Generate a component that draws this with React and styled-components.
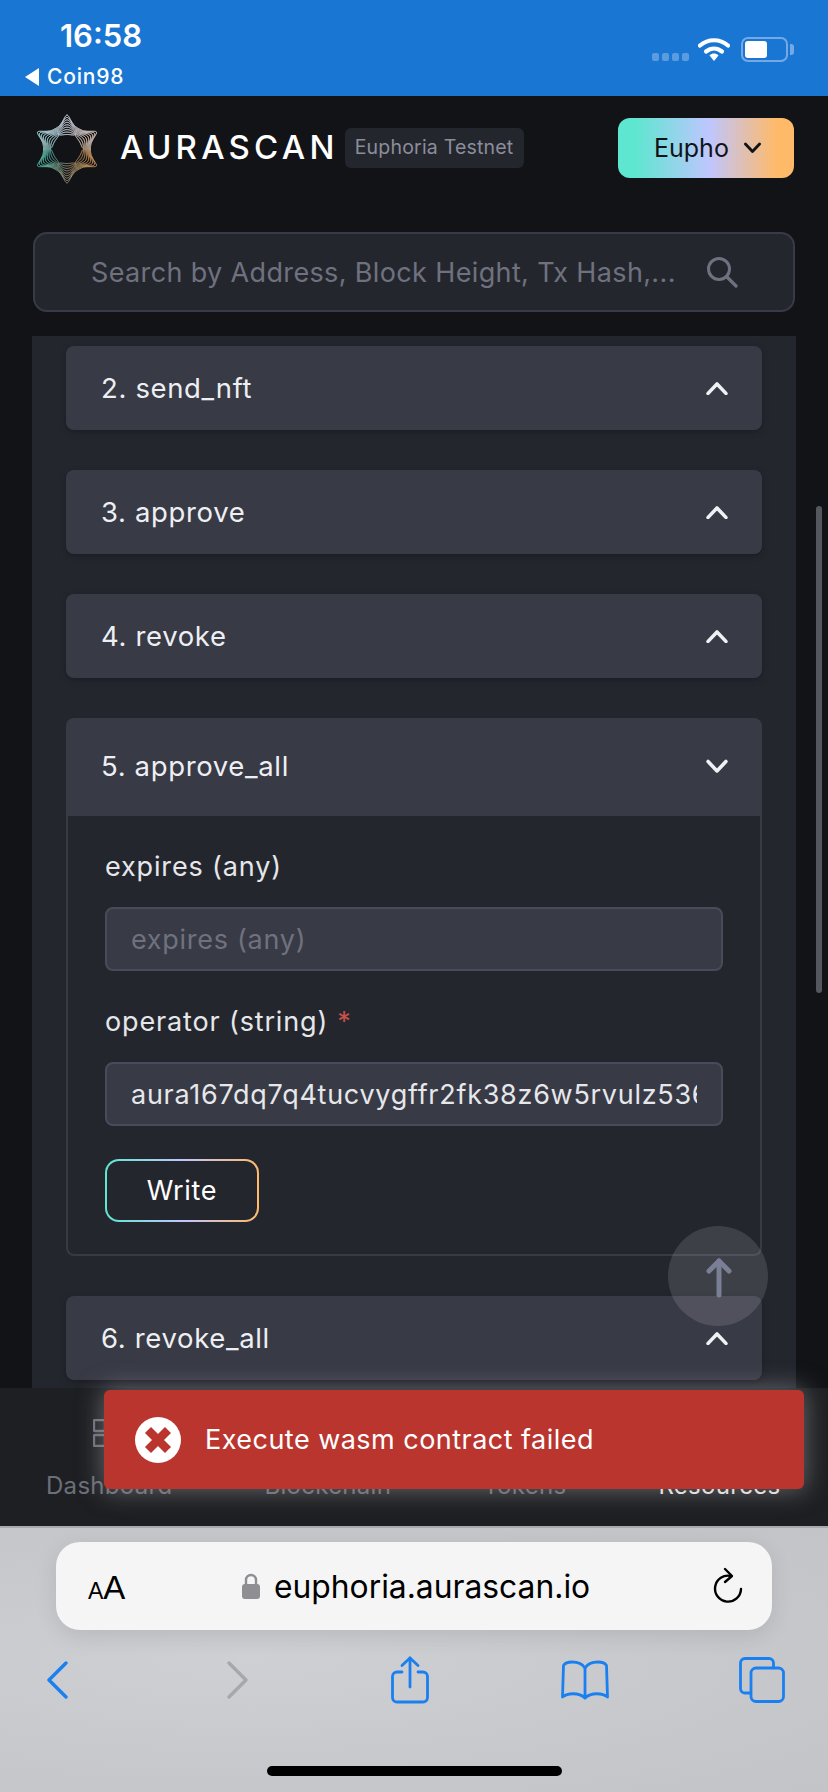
import React from "react";
import styled, { createGlobalStyle } from "styled-components";

const Global = createGlobalStyle`
  html, body { margin: 0; padding: 0; background: #121317; }
  * { box-sizing: border-box; }
  #root { width: 828px; height: 1792px; }
`;

const Page = styled.div`
  position: relative;
  width: 828px;
  height: 1792px;
  display: flex;
  flex-direction: column;
  overflow: hidden;
  background: #121317;
  font-family: Inter, "Noto Sans", sans-serif;
`;

const StatusBar = styled.div`
  height: 96px;
  flex: none;
  background: #1976d3;
  display: flex;
  justify-content: space-between;
  color: #fff;
  padding: 0 34px 0 25px;
`;
const StatusLeft = styled.div`
  display: flex;
  flex-direction: column;
`;
const Time = styled.div`
  font-size: 31px;
  font-weight: 600;
  line-height: 36px;
  margin: 18px 0 0 35px;
`;
const Back = styled.div`
  display: flex;
  align-items: center;
  gap: 8px;
  font-size: 21px;
  font-weight: 500;
  letter-spacing: 0.8px;
  line-height: 26px;
  margin-top: 10px;
`;
const StatusRight = styled.div`
  display: flex;
  align-items: flex-start;
  padding-top: 37px;
`;
const Dots = styled.div`
  display: flex;
  gap: 2.4px;
  margin: 16px 9px 0 0;
`;
const Dot = styled.span`
  width: 7.5px;
  height: 8px;
  border-radius: 2px;
  background: #5b9be0;
`;
const Battery = styled.div`
  width: 47px;
  height: 25px;
  margin-left: 11px;
  border: 2px solid #74a9e6;
  border-radius: 7px;
  padding: 2px;
`;
const BatteryFill = styled.div`
  width: 22px;
  height: 17px;
  border-radius: 3px;
  background: #fff;
`;
const BatteryNub = styled.div`
  width: 4px;
  height: 11px;
  margin: 7px 0 0 2px;
  border-radius: 0 3px 3px 0;
  background: #74a9e6;
`;

const Header = styled.div`
  flex: none;
  height: 136px;
  display: flex;
  align-items: flex-start;
  padding: 18px 34px 0 35px;
`;
const Brand = styled.div`
  font-size: 33px;
  font-weight: 500;
  letter-spacing: 4.2px;
  line-height: 40px;
  color: #fff;
  margin: 13px 0 0 21px;
`;
const Badge = styled.div`
  height: 40px;
  width: 179px;
  margin: 14px 0 0 6px;
  background: #24262e;
  border-radius: 6px;
  color: #8b8e9a;
  font-size: 19.5px;
  letter-spacing: 0.2px;
  line-height: 38px;
  text-align: center;
  white-space: nowrap;
`;
const Network = styled.div`
  margin: 4px 0 0 auto;
  width: 176px;
  height: 60px;
  border-radius: 12px;
  background: linear-gradient(90deg, #5ee6d0 10%, #bfc6ff 52%, #ffba69 90%);
  display: flex;
  align-items: center;
  gap: 14px;
  padding-left: 36px;
  color: #121317;
  font-size: 25px;
`;

const SearchWrap = styled.div`
  flex: none;
  padding: 0 33px 24px;
`;
const Search = styled.div`
  height: 80px;
  background: #24262e;
  border: 2px solid #383b47;
  border-radius: 14px;
  display: flex;
  align-items: center;
  justify-content: space-between;
  padding: 0 55px 0 56px;
  color: #6f727e;
  font-size: 27px;
  letter-spacing: 0.36px;
  white-space: nowrap;
`;

const Panel = styled.div`
  flex: 1;
  margin: 0 32px;
  background: #24262e;
  padding: 10px 34px 0;
  overflow: hidden;
  display: flex;
  flex-direction: column;
  gap: 40px;
`;
const Item = styled.div`
  flex: none;
  border-radius: 8px;
`;
const ItemHead = styled.div`
  height: ${(p) => (p.$open ? 98 : 84)}px;
  background: #383a46;
  border-radius: ${(p) => (p.$open ? "8px 8px 0 0" : "8px")};
  box-shadow: ${(p) => (p.$open ? "none" : "0 2px 6px rgba(0,0,0,.25)")};
  display: flex;
  align-items: center;
  justify-content: space-between;
  padding: 0 33px ${(p) => (p.$open ? 2 : 0)}px 35px;
  color: #eeeff2;
  font-size: 27.5px;
  letter-spacing: 0.65px;
`;
const ItemBody = styled.div`
  height: 440px;
  border: 2px solid #383a46;
  border-top: 0;
  border-radius: 0 0 8px 8px;
  padding: 32px 37px 0;
`;
const Label = styled.div`
  color: #e6e7ea;
  font-size: 27px;
  letter-spacing: 0.85px;
  line-height: 38px;
`;
const Star = styled.span`
  color: #c94f4a;
  margin-left: 9px;
`;
const Field = styled.input`
  display: block;
  width: 100%;
  height: 64px;
  margin: 21px 0 32px;
  background: #383a46;
  border: 2px solid #494c58;
  border-radius: 8px;
  padding: 0 24px;
  color: #e6e7ea;
  font-family: inherit;
  font-size: 27px;
  letter-spacing: 0.72px;
  outline: none;
  &::placeholder { color: #6f727e; opacity: 1; }
`;
const WriteButton = styled.div`
  width: 154px;
  height: 63px;
  margin-top: 33px;
  border: 2px solid transparent;
  border-radius: 14px;
  background: linear-gradient(#24262e, #24262e) padding-box,
    linear-gradient(90deg, #5ee6d0, #bfc6ff 50%, #ffba69) border-box;
  display: flex;
  align-items: center;
  justify-content: center;
  color: #fff;
  font-size: 27px;
  letter-spacing: 0.7px;
`;

const BottomNav = styled.div`
  flex: none;
  height: 138px;
  background: #1e1f22;
  display: flex;
  gap: 92px;
  padding: 31px 0 0 46px;
`;
const NavItem = styled.div`
  display: flex;
  flex-direction: column;
  align-items: center;
  gap: 24px;
  color: ${(p) => (p.$active ? "#f2f2f4" : "#6c6f7a")};
  font-size: 24px;
  letter-spacing: 0.3px;
  line-height: 30px;
`;

const Safari = styled.div`
  flex: none;
  height: 266px;
  position: relative;
  border-top: 2px solid #a9aaad;
  background: radial-gradient(ellipse at 30% 50%, #cfd0d4 0%, #c7c8cc 60%, #c3c4c8 100%);
  padding: 14px 56px 0 56px;
  display: flex;
  flex-direction: column;
`;
const UrlBar = styled.div`
  flex: none;
  height: 88px;
  border-radius: 24px;
  background: #f5f5f5;
  box-shadow: 0 6px 22px rgba(0, 0, 0, 0.1);
  display: flex;
  align-items: center;
  padding: 0 28px 0 32px;
  color: #000;
`;
const AaSmall = styled.span`
  font-family: "Liberation Sans", sans-serif;
  font-size: 23px;
`;
const AaBig = styled.span`
  font-family: "Liberation Sans", sans-serif;
  font-size: 33px;
`;
const Aa = styled.div`
  display: flex;
  align-items: baseline;
  width: 154px;
  margin-top: 4px;
`;
const Url = styled.div`
  flex: 1;
  display: flex;
  align-items: center;
  gap: 14px;
  font-size: 31.8px;
`;
const Tools = styled.div`
  height: 72px;
  margin: 14px 0 0 -10px;
  display: flex;
  align-items: center;
`;
const ToolIcon = styled.span`
  display: flex;
  flex: none;
  margin-left: ${(p) => p.$gap || 0}px;
`;
const HomeBar = styled.div`
  position: absolute;
  left: 267px;
  bottom: 16px;
  width: 295px;
  height: 10px;
  border-radius: 5px;
  background: #000;
`;

const Toast = styled.div`
  position: absolute;
  left: 104px;
  top: 1390px;
  width: 700px;
  height: 99px;
  background: #bb352f;
  border-radius: 6px;
  box-shadow: 0 0 24px 2px rgba(165, 165, 170, 0.5);
  display: flex;
  align-items: center;
  gap: 24px;
  padding-left: 31px;
  color: #fff;
  font-size: 27px;
  letter-spacing: 0.47px;
`;
const ScrollTop = styled.div`
  position: absolute;
  left: 668px;
  top: 1226px;
  width: 100px;
  height: 100px;
  border-radius: 50%;
  background: rgba(255, 255, 255, 0.12);
  display: flex;
  align-items: center;
  justify-content: center;
`;
const ScrollThumb = styled.div`
  position: absolute;
  left: 816px;
  top: 506px;
  width: 6px;
  height: 487px;
  border-radius: 3px;
  background: #55575e;
`;

function LogoMark() {
  const paths = [];
  const N = 8;
  const cx = 32;
  const cy = 35;
  const sec = Math.PI / 3;
  for (let k = 0; k <= N; k++) {
    const s = k / N;
    let d = "";
    for (let i = 0; i <= 360; i += 2) {
      const a = (i * Math.PI) / 180;
      const c = 0.5 - 0.5 * Math.cos(6 * a);
      const rOut = 23.5 + 10.5 * Math.pow(c, 1.25);
      const m = ((a % sec) + sec) % sec;
      const rIn = 14.5 / Math.cos(m - sec / 2);
      const r = rIn + (rOut - rIn) * s;
      const tw = 0.2 * (s - 0.5) * Math.sin(6 * a);
      const x = cx + r * Math.cos(a + tw);
      const y = cy + r * Math.sin(a + tw);
      d += `${i === 0 ? "M" : "L"}${x.toFixed(2)} ${y.toFixed(2)}`;
    }
    paths.push(d + "Z");
  }
  return (
    <svg width="64" height="70" viewBox="0 0 64 70">
      <defs>
        <linearGradient id="lgx" x1="0" y1="0" x2="1" y2="0">
          <stop offset="0" stopColor="#5ee6d0" />
          <stop offset="0.5" stopColor="#b9ac8a" />
          <stop offset="1" stopColor="#ffb564" />
        </linearGradient>
        <linearGradient id="lgy" x1="0" y1="0" x2="0" y2="1">
          <stop offset="0" stopColor="#c9daff" />
          <stop offset="0.4" stopColor="#b3b6c0" />
          <stop offset="0.6" stopColor="#b3b6c0" stopOpacity="0" />
        </linearGradient>
      </defs>
      {paths.map((d, i) => (
        <path key={i} d={d} fill="none" stroke="url(#lgx)" strokeWidth="0.7" />
      ))}
      {paths.map((d, i) => (
        <path key={`t${i}`} d={d} fill="none" stroke="url(#lgy)" strokeWidth="0.7" />
      ))}
    </svg>
  );
}

const Chevron = ({ up, color = "#f0f1f4", w = 24 }) => (
  <svg width={w} height={w * 0.62} viewBox="0 0 24 15" fill="none">
    <path
      d={up ? "M3 12.5 12 3l9 9.5" : "M3 2.5 12 12l9-9.5"}
      stroke={color}
      strokeWidth="3.6"
      strokeLinecap="round"
      strokeLinejoin="round"
    />
  </svg>
);

const Row = ({ title, open, children }) => (
  <Item>
    <ItemHead $open={open}>
      <span>{title}</span>
      <Chevron up={!open} />
    </ItemHead>
    {children}
  </Item>
);

export default function App() {
  return (
    <Page>
      <Global />
      <StatusBar>
        <StatusLeft>
          <Time>16:58</Time>
          <Back>
            <svg width="14" height="18" viewBox="0 0 14 18">
              <path d="M14 0v18L0 9z" fill="#fff" />
            </svg>
            Coin98
          </Back>
        </StatusLeft>
        <StatusRight>
          <Dots>
            <Dot />
            <Dot />
            <Dot />
            <Dot />
          </Dots>
          <svg width="32" height="24" viewBox="0 0 32 24" fill="none">
            <path d="M2 8.500C10 1.500 22 1.500 30 8.500" stroke="#fff" strokeWidth="4.2" strokeLinecap="round" />
            <path d="M8 14.500c5-4 11-4 16 0" stroke="#fff" strokeWidth="4.2" strokeLinecap="round" />
            <path d="M11.500 18.500c3-2.600 6-2.600 9 0L16 24z" fill="#fff" />
          </svg>
          <Battery>
            <BatteryFill />
          </Battery>
          <BatteryNub />
        </StatusRight>
      </StatusBar>

      <Header>
        <LogoMark />
        <Brand>AURASCAN</Brand>
        <Badge>Euphoria Testnet</Badge>
        <Network>
          Eupho
          <Chevron color="#121317" w={19} />
        </Network>
      </Header>

      <SearchWrap>
        <Search>
          <span>Search by Address, Block Height, Tx Hash,...</span>
          <svg width="32" height="32" viewBox="0 0 32 32" fill="none" style={{ flex: "none" }}>
            <circle cx="13" cy="13" r="10.500" stroke="#6f727e" strokeWidth="3" />
            <path d="M21 21l9 9" stroke="#6f727e" strokeWidth="3.200" strokeLinecap="round" />
          </svg>
        </Search>
      </SearchWrap>

      <Panel>
        <Row title="2. send_nft" />
        <Row title="3. approve" />
        <Row title="4. revoke" />
        <Row title="5. approve_all" open>
          <ItemBody>
            <Label>expires (any)</Label>
            <Field placeholder="expires (any)" readOnly />
            <Label>
              operator (string)<Star>*</Star>
            </Label>
            <Field readOnly value="aura167dq7q4tucvygffr2fk38z6w5rvulz5369zfl0z" />
            <WriteButton>Write</WriteButton>
          </ItemBody>
        </Row>
        <Row title="6. revoke_all" />
      </Panel>

      <BottomNav>
        <NavItem>
          <svg width="32" height="28" viewBox="0 0 32 28" fill="none" stroke="#6c6f7a" strokeWidth="2.400">
            <rect x="1" y="1" width="11" height="11" rx="1" />
            <rect x="1" y="16" width="11" height="11" rx="1" />
            <rect x="20" y="1" width="11" height="11" rx="1" />
            <rect x="20" y="16" width="11" height="11" rx="1" />
          </svg>
          Dashboard
        </NavItem>
        <NavItem>
          <svg width="28" height="28" />
          Blockchain
        </NavItem>
        <NavItem>
          <svg width="28" height="28" />
          Tokens
        </NavItem>
        <NavItem $active>
          <svg width="28" height="28" />
          Resources
        </NavItem>
      </BottomNav>

      <Safari>
        <UrlBar>
          <Aa>
            <AaSmall>A</AaSmall>
            <AaBig>A</AaBig>
          </Aa>
          <Url>
            <svg width="18" height="26" viewBox="0 0 18 26" fill="none">
              <path d="M4 12V7a5 5 0 0 1 10 0v5" stroke="#8e8e93" strokeWidth="2.400" />
              <rect x="0" y="11" width="18" height="15" rx="3" fill="#8e8e93" />
            </svg>
            euphoria.aurascan.io
          </Url>
          <svg width="32" height="38" viewBox="0 0 32 38" fill="none" stroke="#000" strokeWidth="2.400" strokeLinecap="round" strokeLinejoin="round">
            <path d="M19 9A13 13 0 1 0 29 22" />
            <path d="M13 2l7 7-7 6" />
          </svg>
        </UrlBar>
        <Tools>
          <ToolIcon>
            <svg width="22" height="38" viewBox="0 0 22 38" fill="none">
              <path d="M20 2 3 19l17 17" stroke="#1a80f0" strokeWidth="3.400" strokeLinecap="round" strokeLinejoin="round" />
            </svg>
          </ToolIcon>
          <ToolIcon $gap={159}>
            <svg width="22" height="38" viewBox="0 0 22 38" fill="none">
              <path d="M2 2l17 17L2 36" stroke="#a7a8ac" strokeWidth="3.400" strokeLinecap="round" strokeLinejoin="round" />
            </svg>
          </ToolIcon>
          <ToolIcon $gap={142}>
            <svg width="38" height="48" viewBox="0 0 38 48" fill="none" stroke="#1a80f0" strokeWidth="2.800" strokeLinecap="round" strokeLinejoin="round">
              <path d="M11 16H6a4.500 4.500 0 0 0-4.500 4.500v21A4.500 4.500 0 0 0 6 46h26a4.500 4.500 0 0 0 4.500-4.500v-21A4.500 4.500 0 0 0 32 16h-5" />
              <path d="M19 31V2" />
              <path d="M11 9.500 19 2l8 7.500" />
            </svg>
          </ToolIcon>
          <ToolIcon $gap={132}>
            <svg width="48" height="40" viewBox="0 0 48 40" fill="none" stroke="#1a80f0" strokeWidth="2.800" strokeLinecap="round" strokeLinejoin="round">
              <path d="M24 8C21 3 16 2 11 2 7 2 4 3 2.500 5.500L1.500 37C6 33 18 32 24 38c6-6 18-5 22.500-1L45.500 5.500C44 3 41 2 37 2c-5 0-10 1-13 6z" />
              <path d="M24 8v30" />
            </svg>
          </ToolIcon>
          <ToolIcon $gap={130}>
            <svg width="46" height="46" viewBox="0 0 46 46" fill="none" stroke="#1a80f0" strokeWidth="2.800" strokeLinejoin="round">
              <path d="M11 36H6a4.500 4.500 0 0 1-4.500-4.500V6A4.500 4.500 0 0 1 6 1.500h24A4.500 4.500 0 0 1 34.500 6v4" />
              <rect x="12" y="11" width="32.500" height="33.500" rx="5" />
            </svg>
          </ToolIcon>
        </Tools>
        <HomeBar />
      </Safari>

      <ScrollThumb />
      <ScrollTop>
        <svg width="26" height="40" viewBox="0 0 26 40" fill="none" stroke="#7a7f96" strokeWidth="5" strokeLinecap="round" strokeLinejoin="round" style={{ marginTop: 4, marginLeft: 2 }}>
          <path d="M13 37V3" />
          <path d="M3 13 13 3l10 10" />
        </svg>
      </ScrollTop>
      <Toast>
        <svg width="46" height="46" viewBox="0 0 46 46" style={{ flex: "none" }}>
          <circle cx="23" cy="23" r="23" fill="#fff" />
          <path d="M13 13l20 20M33 13 13 33" stroke="#bb352f" strokeWidth="8.500" />
        </svg>
        Execute wasm contract failed
      </Toast>
    </Page>
  );
}
